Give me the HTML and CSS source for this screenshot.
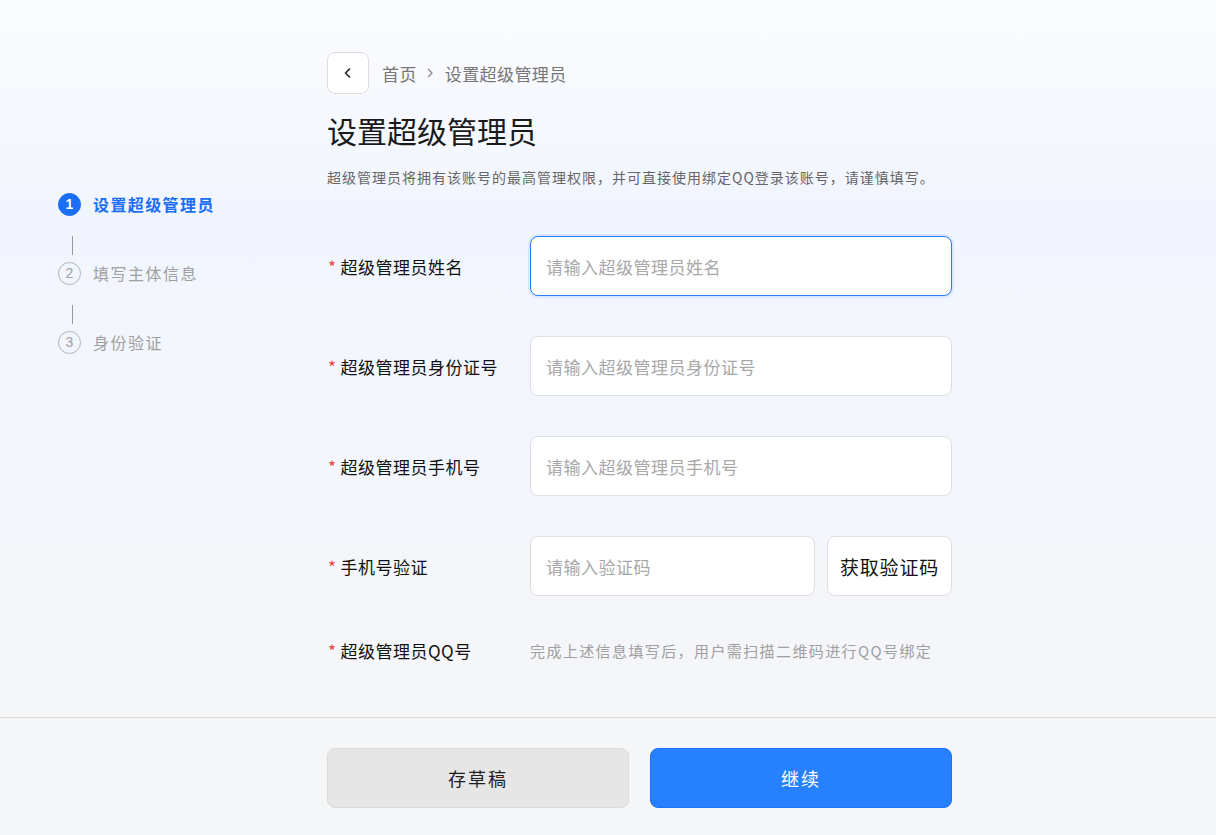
FILE: index.html
```html
<!DOCTYPE html>
<html lang="zh-CN">
<head>
    <meta charset="UTF-8">
    <meta name="viewport" content="width=device-width, initial-scale=1.0">
    <title>设置超级管理员</title>
    <link rel="stylesheet" href="styles.css">
</head>
<body>
    <div class="page">
        <aside class="steps">
            <div class="step active">
                <span class="step-num">1</span>
                <span class="step-name">设置超级管理员</span>
            </div>
            <div class="step-line"></div>
            <div class="step">
                <span class="step-num">2</span>
                <span class="step-name">填写主体信息</span>
            </div>
            <div class="step-line"></div>
            <div class="step">
                <span class="step-num">3</span>
                <span class="step-name">身份验证</span>
            </div>
        </aside>

        <main class="content">
            <div class="crumbs">
                <button class="back-btn" type="button">
                    <svg width="14" height="14" viewBox="0 0 14 14"><path d="M8.5 3 L4.5 7 L8.5 11" fill="none" stroke="#222" stroke-width="1.6" stroke-linecap="round" stroke-linejoin="round"/></svg>
                </button>
                <span class="crumb">首页</span>
                <svg class="crumb-sep" width="12" height="12" viewBox="0 0 12 12"><path d="M4.5 2.5 L8 6 L4.5 9.5" fill="none" stroke="#888" stroke-width="1.3" stroke-linecap="round" stroke-linejoin="round"/></svg>
                <span class="crumb">设置超级管理员</span>
            </div>

            <h1>设置超级管理员</h1>
            <p class="desc">超级管理员将拥有该账号的最高管理权限，并可直接使用绑定QQ登录该账号，请谨慎填写。</p>

            <form class="form">
                <div class="row">
                    <label class="label"><i>*</i>超级管理员姓名</label>
                    <input class="input focused" type="text" placeholder="请输入超级管理员姓名">
                </div>
                <div class="row">
                    <label class="label"><i>*</i>超级管理员身份证号</label>
                    <input class="input" type="text" placeholder="请输入超级管理员身份证号">
                </div>
                <div class="row">
                    <label class="label"><i>*</i>超级管理员手机号</label>
                    <input class="input" type="text" placeholder="请输入超级管理员手机号">
                </div>
                <div class="row">
                    <label class="label"><i>*</i>手机号验证</label>
                    <div class="code-group">
                        <input class="input" type="text" placeholder="请输入验证码">
                        <button class="code-btn" type="button">获取验证码</button>
                    </div>
                </div>
                <div class="row row-qq">
                    <label class="label"><i>*</i>超级管理员QQ号</label>
                    <span class="hint">完成上述信息填写后，用户需扫描二维码进行QQ号绑定</span>
                </div>
            </form>
        </main>
    </div>

    <footer class="footer">
        <div class="footer-inner">
            <button class="btn btn-draft" type="button">存草稿</button>
            <button class="btn btn-primary" type="button">继续</button>
        </div>
    </footer>
</body>
</html>
```

FILE: styles.css
```css
* {
    box-sizing: border-box;
}

html, body {
    height: 100%;
}

body {
    margin: 0;
    display: flex;
    flex-direction: column;
    font-family: "Noto Sans CJK SC", "Noto Sans", sans-serif;
    color: #1f1f1f;
    background: linear-gradient(180deg, #fbfcfe 0%, #f1f5fe 25%, #f3f6fc 55%, #f5f6f8 85%);
}

.page {
    flex: 1;
    display: flex;
    padding-left: 58px;
}

/* steps on the left */
.steps {
    width: 269px;
    padding-top: 192px;
}

.step {
    display: flex;
    align-items: center;
    height: 24px;
    font-size: 16px;
    letter-spacing: 1.5px;
    color: #a0a0a0;
}

.step-num {
    width: 23px;
    height: 23px;
    border-radius: 50%;
    border: 1px solid #b3b3b3;
    display: flex;
    justify-content: center;
    align-items: center;
    font-family: "Liberation Sans", Arial, sans-serif;
    font-size: 14px;
    letter-spacing: 0;
    color: #a0a0a0;
    margin-right: 12px;
}

.step.active .step-name {
    color: #1a6ef5;
    font-weight: bold;
    letter-spacing: 1.4px;
}

.step.active .step-num {
    background-color: #1a6ef5;
    border-color: #1a6ef5;
    color: #fff;
    font-weight: bold;
}

.step-line {
    width: 1px;
    height: 19px;
    background-color: #999;
    margin: 20px 0 6px 14px;
}

/* main column */
.content {
    width: 625px;
    padding-top: 52px;
}

.crumbs {
    display: flex;
    align-items: center;
    font-size: 17px;
    letter-spacing: 0.4px;
    color: #777;
}

.back-btn {
    width: 42px;
    height: 42px;
    border: 1px solid #dcdcdc;
    border-radius: 8px;
    background-color: #fff;
    display: flex;
    justify-content: center;
    align-items: center;
    padding: 0;
    margin-right: 13px;
    cursor: pointer;
}

.crumb-sep {
    margin: 0 9px 0 7px;
}

h1 {
    margin: 16px 0 0;
    font-size: 30px;
    font-weight: normal;
    line-height: 40px;
    color: #1a1a1a;
}

.desc {
    margin: 17px 0 0;
    font-size: 14px;
    letter-spacing: 1px;
    line-height: 20px;
    white-space: nowrap;
    color: #666;
}

.form {
    margin-top: 49px;
}

.row {
    display: flex;
    align-items: center;
    height: 60px;
    margin-bottom: 40px;
}

.row-qq {
    height: 28px;
    margin-top: 14px;
}

.label {
    width: 203px;
    font-size: 17px;
    letter-spacing: 0.5px;
    color: #111;
    padding-left: 1px;
}

.label i {
    font-style: normal;
    color: #e84545;
    margin-right: 4px;
}

.input {
    flex: 1;
    min-width: 0;
    height: 60px;
    border: 1px solid #dedede;
    border-radius: 8px;
    background-color: #fff;
    padding: 0 15px;
    font-family: inherit;
    font-size: 17px;
    letter-spacing: 0.5px;
    color: #1f1f1f;
    outline: none;
}

.input::placeholder {
    color: #a8a8a8;
}

.input.focused {
    border-color: #2a7bf3;
    box-shadow: 0 0 0 2px rgba(38, 128, 255, 0.12);
}

.code-group {
    flex: 1;
    display: flex;
    gap: 12px;
}

.code-btn {
    width: 125px;
    height: 60px;
    border: 1px solid #dedede;
    border-radius: 8px;
    background-color: #fff;
    font-family: inherit;
    font-size: 19px;
    letter-spacing: 0.8px;
    color: #111;
    padding: 0;
    cursor: pointer;
}

.hint {
    font-size: 15px;
    letter-spacing: 1.4px;
    white-space: nowrap;
    color: #a0a0a0;
}

/* bottom bar */
.footer {
    height: 118px;
    border-top: 1px solid #dcdcdc;
    background-color: #f5f6f7;
}

.footer-inner {
    display: flex;
    gap: 21px;
    width: 625px;
    margin-left: 327px;
    padding-top: 30px;
}

.btn {
    flex: 1;
    height: 60px;
    border-radius: 8px;
    font-family: inherit;
    font-size: 18px;
    letter-spacing: 2px;
    cursor: pointer;
}

.btn-draft {
    background-color: #e6e6e6;
    border: 1px solid #dadada;
    color: #1f1f1f;
}

.btn-primary {
    background-color: #2680ff;
    border: 1px solid #1f74f0;
    color: #fff;
}
```
